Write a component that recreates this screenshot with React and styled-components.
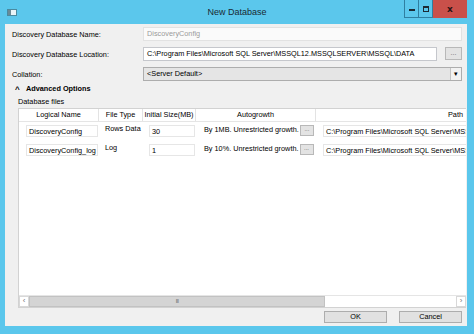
import React from 'react';
import styled, { createGlobalStyle } from 'styled-components';

const GlobalStyle = createGlobalStyle`
  html, body {
    margin: 0;
    padding: 0;
    background: #5bc7ec;
  }
  body {
    font-family: 'Liberation Sans', Arial, sans-serif;
    font-size: 7.3px;
    color: #000;
  }
`;

const files = [
  { name: 'DiscoveryConfig', type: 'Rows Data', size: '30', growth: 'By 1MB. Unrestricted growth.' },
  { name: 'DiscoveryConfig_log', type: 'Log', size: '1', growth: 'By 10%. Unrestricted growth.' },
];

const cols = '80px 44px 53px 120px 280px';

function App() {
  return (
    <Window>
      <GlobalStyle />
      <TitleBar>
        <AppIcon />
        <Title>New Database</Title>
        <Controls>
          <CtlButton>
            <MinGlyph />
          </CtlButton>
          <CtlButton>
            <MaxGlyph />
          </CtlButton>
          <CloseButton>x</CloseButton>
        </Controls>
      </TitleBar>

      <Client>
        <Form>
          <Label>Discovery Database Name:</Label>
          <TextBox disabled>DiscoveryConfig</TextBox>

          <Label>Discovery Database Location:</Label>
          <FieldRow>
            <TextBox>C:\Program Files\Microsoft SQL Server\MSSQL12.MSSQLSERVER\MSSQL\DATA</TextBox>
            <DotsButton>...</DotsButton>
          </FieldRow>

          <Label>Collation:</Label>
          <Combo>
            <ComboText>&lt;Server Default&gt;</ComboText>
            <ComboArrow>▾</ComboArrow>
          </Combo>
        </Form>

        <SectionHead>
          <Caret>^</Caret>
          Advanced Options
        </SectionHead>
        <SubHead>Database files</SubHead>

        <Grid>
          <GridBody>
            <HeaderRow>
              <HeadCell>Logical Name</HeadCell>
              <HeadCell>File Type</HeadCell>
              <HeadCell>Initial Size(MB)</HeadCell>
              <HeadCell>Autogrowth</HeadCell>
              <HeadCell>Path</HeadCell>
            </HeaderRow>
            {files.map((f) => (
              <DataRow key={f.name}>
                <Cell $pl={7}>
                  <CellBox>{f.name}</CellBox>
                </Cell>
                <Cell $pl={6}>
                  <CellText>{f.type}</CellText>
                </Cell>
                <Cell $pl={6}>
                  <CellBox>{f.size}</CellBox>
                </Cell>
                <Cell $pl={8}>
                  <GrowthText>{f.growth}</GrowthText>
                  <SmallDots>...</SmallDots>
                </Cell>
                <Cell $pl={7}>
                  <CellBox>C:\Program Files\Microsoft SQL Server\MSSQL12.MSSQLSERVER\MSSQL\DATA\</CellBox>
                </Cell>
              </DataRow>
            ))}
          </GridBody>
          <HScroll>
            <ScrollArrow>‹</ScrollArrow>
            <Thumb>III</Thumb>
            <Track />
            <ScrollArrow>›</ScrollArrow>
          </HScroll>
        </Grid>

        <Footer>
          <DialogButton>OK</DialogButton>
          <DialogButton>Cancel</DialogButton>
        </Footer>
      </Client>
    </Window>
  );
}

const Window = styled.div`
  width: 474px;
  height: 334px;
  background: #5bc7ec;
  display: flex;
  flex-direction: column;
  overflow: hidden;
`;

const TitleBar = styled.div`
  position: relative;
  height: 24px;
  flex-shrink: 0;
  display: flex;
  align-items: center;
  justify-content: center;
`;

const AppIcon = styled.div`
  position: absolute;
  left: 7px;
  top: 9px;
  width: 8px;
  height: 5px;
  background: #e8f4f8;
  border: 1px solid #4a8aa0;
  &::after {
    content: '';
    display: block;
    width: 3px;
    height: 5px;
    background: #6a8a96;
  }
`;

const Title = styled.div`
  font-family: 'Liberation Sans', Arial, sans-serif;
  font-size: 9px;
  color: #1a2a33;
  margin-top: -1px;
`;

const Controls = styled.div`
  position: absolute;
  right: 7px;
  top: 0;
  display: flex;
  height: 18px;
`;

const CtlButton = styled.div`
  width: 13px;
  height: 17px;
  border: 1px solid #2f7fa1;
  border-top: none;
  margin-left: -1px;
  display: flex;
  align-items: center;
  justify-content: center;
`;

const MinGlyph = styled.div`
  width: 6px;
  height: 2px;
  margin-top: 3px;
  background: #1c2a33;
`;

const MaxGlyph = styled.div`
  width: 4px;
  height: 3px;
  border: 1px solid #1c2a33;
  border-top-width: 2px;
`;

const CloseButton = styled.div`
  width: 34px;
  height: 18px;
  background: #c9504a;
  color: #2b1414;
  font-family: 'DejaVu Sans', sans-serif;
  font-weight: bold;
  font-size: 9px;
  display: flex;
  align-items: center;
  justify-content: center;
`;

const Client = styled.div`
  flex: 1;
  min-height: 0;
  min-width: 0;
  margin: 0 7px 8px 5px;
  background: #f0f0f0;
  padding: 3px 5px 3px 7px;
  display: flex;
  flex-direction: column;
`;

const Form = styled.div`
  display: grid;
  grid-template-columns: 131px minmax(0, 1fr);
  grid-auto-rows: 14px;
  row-gap: 6px;
  align-items: center;
`;

const Label = styled.div`
  white-space: nowrap;
`;

const FieldRow = styled.div`
  display: flex;
  gap: 8px;
  height: 14px;
  min-width: 0;
`;

const TextBox = styled.div`
  flex: 1;
  min-width: 0;
  height: 14px;
  box-sizing: border-box;
  border: 1px solid ${(p) => (p.disabled ? '#e2e2e2' : '#c5c7cc')};
  background: ${(p) => (p.disabled ? '#fafafa' : '#fff')};
  color: ${(p) => (p.disabled ? '#9a9a9a' : '#000')};
  padding: 0 3px;
  line-height: 12px;
  white-space: nowrap;
  overflow: hidden;
`;

const DotsButton = styled.div`
  width: 17px;
  height: 13px;
  flex-shrink: 0;
  box-sizing: border-box;
  border: 1px solid #b8b8b8;
  background: #e3e3e3;
  color: #666;
  font-size: 7px;
  line-height: 9px;
  text-align: center;
`;

const Combo = styled.div`
  height: 14px;
  box-sizing: border-box;
  border: 1px solid #adadad;
  background: #e5e5e5;
  display: flex;
`;

const ComboText = styled.div`
  flex: 1;
  padding-left: 3px;
  line-height: 12px;
`;

const ComboArrow = styled.div`
  width: 10px;
  border-left: 1px solid #c4c4c4;
  background: #f2f2f2;
  font-size: 7px;
  line-height: 12px;
  text-align: center;
`;

const SectionHead = styled.div`
  margin-top: 3px;
  height: 10px;
  line-height: 10px;
  font-weight: bold;
  display: flex;
  align-items: center;
  padding-left: 3px;
`;

const Caret = styled.span`
  width: 11px;
  font-size: 8px;
  line-height: 12px;
  height: 10px;
`;

const SubHead = styled.div`
  margin-top: 3px;
  height: 10px;
  line-height: 10px;
  padding-left: 6px;
`;

const Grid = styled.div`
  margin: 1px -4px 0 6px;
  flex: 1;
  min-height: 0;
  background: #fff;
  border: 1px solid #d2d2d2;
  border-right: none;
  display: flex;
  flex-direction: column;
  overflow: hidden;
`;

const GridBody = styled.div`
  flex: 1;
  overflow: hidden;
`;

const HeaderRow = styled.div`
  display: grid;
  grid-template-columns: ${cols};
  height: 12px;
  border-bottom: 1px solid #e5e5e5;
`;

const HeadCell = styled.div`
  text-align: center;
  line-height: 12px;
  border-right: 1px solid #e3e3e3;
  white-space: nowrap;
  overflow: hidden;
`;

const DataRow = styled.div`
  display: grid;
  grid-template-columns: ${cols};
  height: 19px;
`;

const Cell = styled.div`
  display: flex;
  align-items: flex-start;
  padding: 2px 1px 0 ${(p) => p.$pl}px;
  overflow: hidden;
  white-space: nowrap;
  min-width: 0;
`;

const CellBox = styled.div`
  flex: 1;
  min-width: 0;
  height: 12px;
  box-sizing: border-box;
  border: 1px solid #e6e6e6;
  padding: 0 2px;
  line-height: 11px;
  margin-top: 1px;
  overflow: hidden;
`;

const CellText = styled.div`
  line-height: 10px;
`;

const GrowthText = styled.div`
  line-height: 10px;
  margin-top: 1px;
`;

const SmallDots = styled.div`
  width: 14px;
  height: 11px;
  flex-shrink: 0;
  box-sizing: border-box;
  margin-left: 1px;
  margin-top: 1px;
  border: 1px solid #b8b8b8;
  background: #e3e3e3;
  color: #555;
  font-size: 6px;
  line-height: 7px;
  text-align: center;
`;

const HScroll = styled.div`
  height: 11px;
  flex-shrink: 0;
  display: flex;
  border-top: 1px solid #e5e5e5;
`;

const ScrollArrow = styled.div`
  width: 10px;
  background: #fff;
  border: 1px solid #d8d8d8;
  box-sizing: border-box;
  color: #777;
  font-size: 8px;
  line-height: 8px;
  text-align: center;
`;

const Thumb = styled.div`
  width: 296px;
  background: #d4d4d4;
  border: 1px solid #c2c2c2;
  box-sizing: border-box;
  color: #666;
  font-size: 5px;
  line-height: 9px;
  letter-spacing: -0.5px;
  text-align: center;
`;

const Track = styled.div`
  flex: 1;
  background: #fff;
`;

const Footer = styled.div`
  margin-top: 3px;
  flex-shrink: 0;
  display: flex;
  justify-content: flex-end;
  gap: 12px;
`;

const DialogButton = styled.div`
  width: 63px;
  height: 12px;
  box-sizing: border-box;
  border: 1px solid #adadad;
  background: #e1e1e1;
  text-align: center;
  line-height: 10px;
`;

export default App;
